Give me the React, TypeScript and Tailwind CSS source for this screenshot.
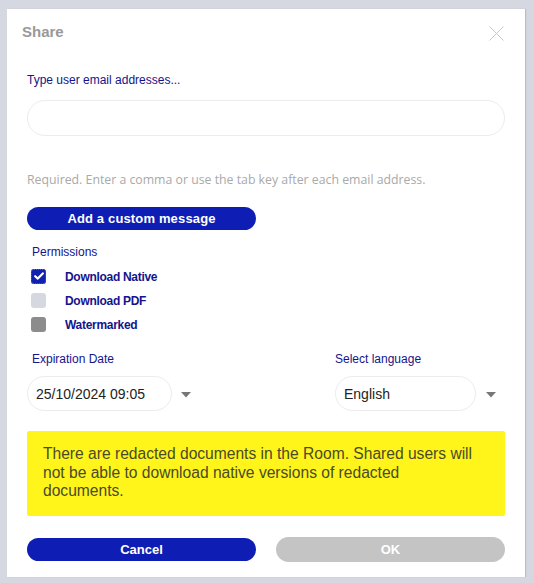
import React from "react";

const navy = "text-[#14148c]";

function Caret() {
  return (
    <svg width="10" height="6" viewBox="0 0 10 6" className="shrink-0">
      <path d="M0 0 H10 L5 5.5 Z" fill="#777" />
    </svg>
  );
}

function Check({ state, label }: { state: "on" | "off" | "dis"; label: string }) {
  return (
    <div className="flex items-center h-[24px] pl-[4px]">
      {state === "on" ? (
        <div className="w-[15px] h-[15px] rounded-[3px] bg-[#1020b0] outline outline-1 outline-dotted outline-[#5560d0] -outline-offset-1 flex items-center justify-center">
          <svg width="10" height="8" viewBox="0 0 10 8">
            <path d="M1.2 4.2 L3.8 6.6 L8.8 1.4" stroke="#fff" strokeWidth="2.2" fill="none" strokeLinecap="round" strokeLinejoin="round" />
          </svg>
        </div>
      ) : (
        <div className={`w-[15px] h-[15px] rounded-[3px] ${state === "off" ? "bg-[#d5d8e0]" : "bg-[#8c8c8c]"}`} />
      )}
      <span className={`ml-[19px] pt-[1px] text-[12px] font-bold ${navy} tracking-[-0.3px]`}>{label}</span>
    </div>
  );
}

export default function App() {
  return (
    <div className="min-h-[583px] w-[534px] bg-[#d5d8e0] pt-[9px] pl-[7px]" style={{ fontFamily: '"Liberation Sans", Arial, sans-serif' }}>
      <div className="relative w-[518px] h-[568px] bg-white px-[20px] shadow-[1px_0_1px_rgba(0,0,0,0.12)]">
        <svg className="absolute left-[482px] top-[17px]" width="15" height="15" viewBox="0 0 15 15">
          <path d="M0.5 0.5 L14.5 14.5 M14.5 0.5 L0.5 14.5" stroke="#c8c8c8" strokeWidth="1" />
        </svg>
        <div className="pt-[14px] -ml-[5px] text-[15px] leading-[18px] font-bold text-[#999]">Share</div>
        <div className={`mt-[31px] h-[16px] text-[12px] leading-[16px] ${navy}`}>Type user email addresses...</div>
        <div className="mt-[12px] h-[36px] rounded-full border border-[#ececec]" />
        <div className="mt-[36px] text-[12.3px] leading-[16px] text-[#a9a9a9]" style={{ fontFamily: '"Open Sans", sans-serif' }}>
          Required. Enter a comma or use the tab key after each email address.
        </div>
        <button className="mt-[19px] w-[229px] h-[23px] rounded-full bg-[#0e1eb4] text-white text-[13px] font-bold tracking-[0.15px] flex items-center justify-center">
          Add a custom message
        </button>
        <div className={`mt-[14px] h-[16px] pl-[5px] text-[12px] leading-[16px] ${navy}`}>Permissions</div>
        <div className="mt-[4px] flex flex-col">
          <Check state="on" label="Download Native" />
          <Check state="off" label="Download PDF" />
          <Check state="dis" label="Watermarked" />
        </div>
        <div className="mt-[14px] flex">
          <div className="w-[308px] shrink-0">
            <div className={`pt-[1px] h-[16px] pl-[5px] text-[12px] leading-[16px] ${navy}`}>Expiration Date</div>
            <div className="mt-[10px] flex items-center">
              <div className="w-[145px] h-[35px] rounded-full border border-[#ececec] flex items-center pl-[8px] pt-[1px] text-[14px] text-[#222]">
                25/10/2024 09:05
              </div>
              <div className="ml-[9px] mt-[2px]"><Caret /></div>
            </div>
          </div>
          <div>
            <div className={`pt-[1px] h-[16px] text-[12px] leading-[16px] ${navy}`}>Select language</div>
            <div className="mt-[10px] flex items-center">
              <div className="w-[141px] h-[35px] rounded-full border border-[#ececec] flex items-center pl-[8px] pt-[1px] text-[14px] text-[#222]">
                English
              </div>
              <div className="ml-[10px] mt-[2px]"><Caret /></div>
            </div>
          </div>
        </div>
        <div className="mt-[20px] h-[85px] bg-[#fff51a] rounded-[2px] pl-[16px] pr-[27px] pt-[14px] text-[15.6px] leading-[18.5px] text-[#4a4a2a]">
          There are redacted documents in the Room. Shared users will not be able to download native versions of redacted documents.
        </div>
        <div className="mt-[22px] flex gap-[20px]">
          <button className="w-[229px] h-[23px] rounded-full bg-[#0e1eb4] text-white text-[13px] font-bold">Cancel</button>
          <button className="w-[229px] h-[25px] -mt-[1px] rounded-full bg-[#c4c4c4] text-white text-[13px] font-bold">OK</button>
        </div>
      </div>
    </div>
  );
}
